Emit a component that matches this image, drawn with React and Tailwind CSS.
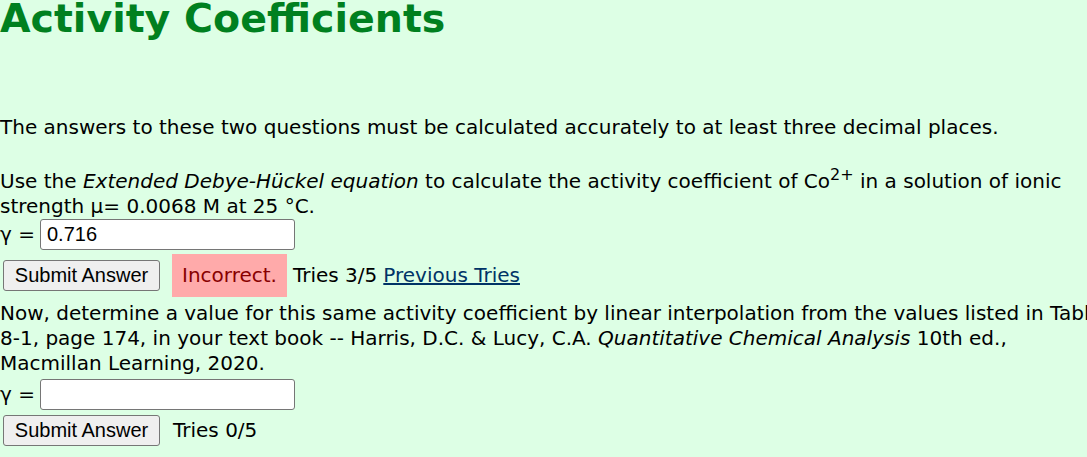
export default function App() {
  return (
    <div className="min-h-screen w-[1087px] overflow-hidden bg-[#ddffe5] font-['DejaVu_Sans',Verdana,sans-serif] text-[20px] leading-[25px] text-black">
      <div className="w-[1110px]">
        <h1 className="text-[39.5px] font-bold leading-[36px] text-[#00801f]">
          Activity Coefficients
        </h1>

        <p className="mt-[79px]">
          The answers to these two questions must be calculated accurately to at least three decimal places.
        </p>

        <p className="mt-[29px]">
          Use the <i>Extended Debye-Hückel equation</i> to calculate the activity coefficient of Co
          <sup className="text-[16px]">2+</sup> in a solution of ionic strength μ= 0.0068 M at 25 °C.
        </p>

        <div className="flex items-center gap-[5px]">
          <span>γ =</span>
          <input
            type="text"
            defaultValue="0.716"
            className="h-[31px] w-[255px] rounded-[3px] border border-[#767676] bg-white px-[6px] font-['Liberation_Sans',Arial,sans-serif] text-[20px]"
          />
        </div>

        <div className="mt-[4px] flex items-center">
          <button className="ml-[3px] h-[31px] w-[157px] rounded-[3px] border border-[#767676] bg-[#efefef] font-['Liberation_Sans',Arial,sans-serif] text-[20px]">
            Submit Answer
          </button>
          <span className="ml-[12px] flex h-[43px] items-center bg-[#ffaaaa] px-[10px] text-[#880000]">
            Incorrect.
          </span>
          <span className="ml-[6px]">Tries 3/5</span>
          <a href="#" className="ml-[6px] text-[#003366] underline">
            Previous Tries
          </a>
        </div>

        <p className="mt-[4px]">
          Now, determine a value for this same activity coefficient by linear interpolation from the values listed in Table
          8-1, page 174, in your text book -- Harris, D.C. &amp; Lucy, C.A. <i>Quantitative Chemical Analysis</i> 10th ed.,
          Macmillan Learning, 2020.
        </p>

        <div className="mt-[3px] flex items-center gap-[5px]">
          <span>γ =</span>
          <input
            type="text"
            className="h-[31px] w-[255px] rounded-[3px] border border-[#767676] bg-white px-[6px] font-['Liberation_Sans',Arial,sans-serif] text-[20px]"
          />
        </div>

        <div className="mt-[5px] flex items-center">
          <button className="ml-[3px] h-[31px] w-[157px] rounded-[3px] border border-[#767676] bg-[#efefef] font-['Liberation_Sans',Arial,sans-serif] text-[20px]">
            Submit Answer
          </button>
          <span className="ml-[13px]">Tries 0/5</span>
        </div>
      </div>
    </div>
  );
}
